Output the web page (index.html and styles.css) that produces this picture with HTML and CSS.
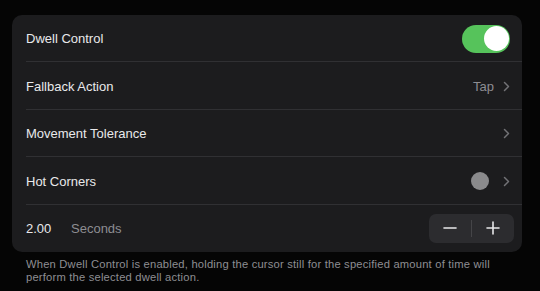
FILE: index.html
```html
<!DOCTYPE html>
<html>
<head>
<meta charset="utf-8">
<link rel="stylesheet" href="styles.css">
</head>
<body>
<div class="page">
  <div class="card">
    <div class="row">
      <span class="label">Dwell Control</span>
      <span class="toggle"><span class="knob"></span></span>
    </div>
    <div class="row">
      <span class="label">Fallback Action</span>
      <span class="trail"><span class="value">Tap</span><svg class="chev" width="7" height="11" viewBox="0 0 7 11"><path d="M1.5 1.5 L5.5 5.5 L1.5 9.5" fill="none" stroke="currentColor" stroke-width="1.5" stroke-linecap="round" stroke-linejoin="round"/></svg></span>
    </div>
    <div class="row">
      <span class="label">Movement Tolerance</span>
      <span class="trail"><svg class="chev" width="7" height="11" viewBox="0 0 7 11"><path d="M1.5 1.5 L5.5 5.5 L1.5 9.5" fill="none" stroke="currentColor" stroke-width="1.5" stroke-linecap="round" stroke-linejoin="round"/></svg></span>
    </div>
    <div class="row">
      <span class="label">Hot Corners</span>
      <span class="trail"><span class="dot"></span><svg class="chev" width="7" height="11" viewBox="0 0 7 11"><path d="M1.5 1.5 L5.5 5.5 L1.5 9.5" fill="none" stroke="currentColor" stroke-width="1.5" stroke-linecap="round" stroke-linejoin="round"/></svg></span>
    </div>
    <div class="row last">
      <span class="label"><span class="num">2.00</span><span class="unit">Seconds</span></span>
      <span class="stepper">
        <span class="step"><svg width="14" height="14" viewBox="0 0 14 14"><path d="M1 7 H13" stroke="#e8e8ea" stroke-width="1.6" stroke-linecap="round"/></svg></span>
        <span class="divider"></span>
        <span class="step"><svg width="14" height="14" viewBox="0 0 14 14"><path d="M1 7 H13 M7 1 V13" stroke="#e8e8ea" stroke-width="1.6" stroke-linecap="round"/></svg></span>
      </span>
    </div>
  </div>
  <p class="footer">When Dwell Control is enabled, holding the cursor still for the specified amount of time will perform the selected dwell action.</p>
</div>
</body>
</html>
```

FILE: styles.css
```css
html, body {
  margin: 0;
  padding: 0;
  background: #050505;
}
body {
  font-family: "Liberation Sans", Arial, sans-serif;
  width: 540px;
  height: 291px;
  overflow: hidden;
}
.page {
  padding: 14.5px 18px 0 12px;
}
.card {
  background: #1c1c1e;
  border-radius: 10px;
  padding-left: 14px;
  overflow: hidden;
}
.row {
  height: 47.5px;
  box-sizing: border-box;
  display: flex;
  align-items: center;
  justify-content: space-between;
  border-bottom: 1px solid #303033;
  padding-right: 12px;
  padding-top: 2px;
}
.row.last {
  border-bottom: none;
  padding-right: 8px;
  padding-top: 0;
}
.label {
  font-size: 13px;
  color: #e9e9eb;
  display: flex;
  align-items: center;
}
.toggle {
  width: 48px;
  height: 28px;
  border-radius: 14px;
  background: #56c35b;
  display: flex;
  align-items: center;
  justify-content: flex-end;
  padding: 0 1.5px;
  box-sizing: border-box;
}
.knob {
  width: 25px;
  height: 25px;
  border-radius: 50%;
  background: #ffffff;
}
.trail {
  display: flex;
  align-items: center;
  gap: 9px;
  color: #727276;
}
.value {
  font-size: 13px;
  color: #8d8d92;
}
.chev {
  display: block;
}
.dot {
  width: 18px;
  height: 18px;
  border-radius: 50%;
  background: #8a8a8c;
  margin-right: 5px;
}
.num {
  width: 45px;
}
.unit {
  color: #8d8d92;
}
.stepper {
  width: 85px;
  height: 29px;
  border-radius: 7px;
  background: #2c2c2f;
  display: flex;
  align-items: center;
}
.step {
  flex: 1;
  display: flex;
  align-items: center;
  justify-content: center;
}
.step svg {
  display: block;
}
.divider {
  width: 1px;
  height: 17px;
  background: #454548;
}
.footer {
  margin: 6px 0 0 14px;
  font-size: 11.2px;
  letter-spacing: 0.2px;
  line-height: 13px;
  color: #8e8e93;
  width: 476px;
}
```
